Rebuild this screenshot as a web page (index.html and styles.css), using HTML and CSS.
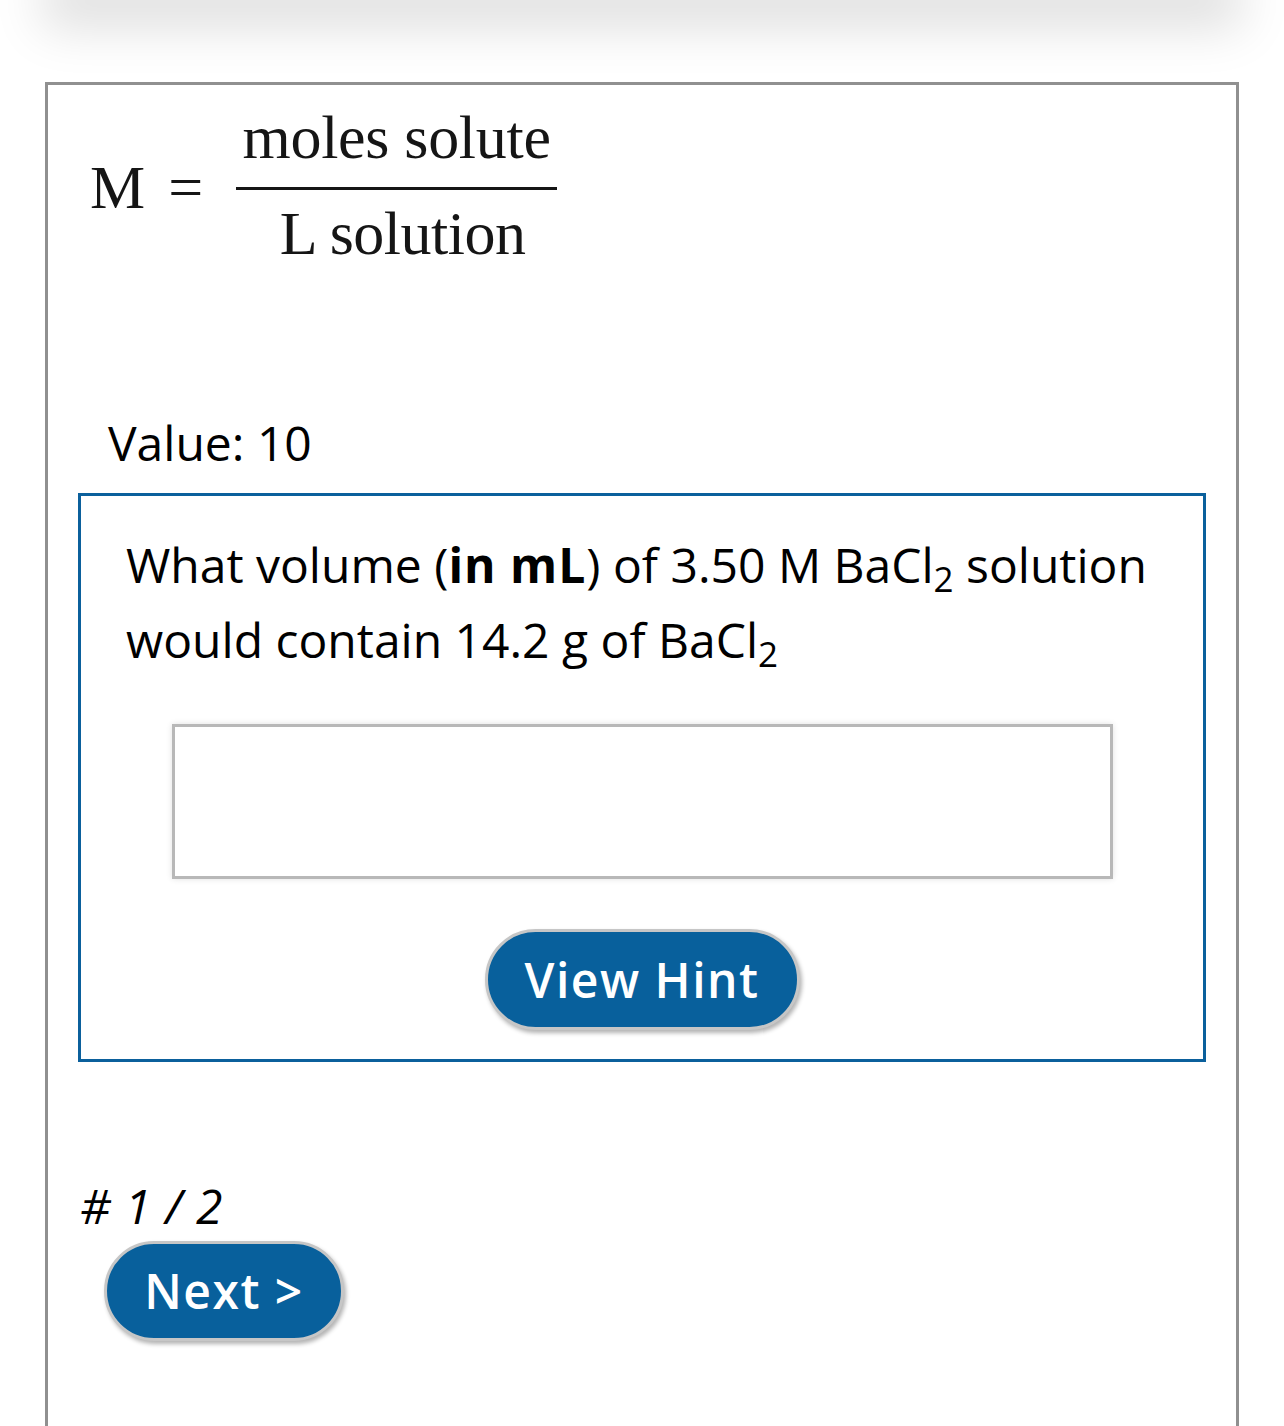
FILE: index.html
```html
<!DOCTYPE html>
<html>
<head>
<meta charset="utf-8">
<link rel="stylesheet" href="styles.css">
</head>
<body>
<div class="topshade"></div>
<main class="card">
  <div class="formula">
    <span class="f-m">M</span>
    <span class="f-eq">=</span>
    <span class="frac">
      <span class="num">moles solute</span>
      <span class="bar"></span>
      <span class="den">L solution</span>
    </span>
  </div>
  <p class="value">Value: 10</p>
  <section class="question">
    <p class="qtext">What volume (<b>in mL</b>) of 3.50 M BaCl<sub>2</sub> solution would contain 14.2 g of BaCl<sub>2</sub></p>
    <input class="answer" type="text">
    <div class="hintrow"><button class="pill hint">View Hint</button></div>
  </section>
  <p class="counter"># 1 / 2</p>
  <button class="pill next">Next &gt;</button>
</main>
</body>
</html>
```
FILE: styles.css
```css
html, body {
  margin: 0;
  padding: 0;
  background: #ffffff;
}
body {
  font-family: "Open Sans", "Liberation Sans", sans-serif;
  color: #000;
  overflow: hidden;
}
.topshade {
  height: 0;
  margin: 0 70px;
  box-shadow: 0 0 50px 28px rgba(0, 0, 0, 0.13);
}
.card {
  margin: 82px 45px 0 45px;
  border: 3px solid #909090;
  border-bottom: none;
  min-height: 1400px;
  box-sizing: border-box;
}
.formula {
  display: flex;
  align-items: flex-start;
  font-family: "Liberation Serif", "Times New Roman", serif;
  font-size: 62px;
  color: #151515;
  margin: 17px 0 0 42px;
  line-height: 62px;
}
.f-m {
  display: block;
  margin-top: 54px;
  letter-spacing: -1px;
}
.f-eq {
  display: block;
  margin: 54px 33px 0 24px;
}
.frac {
  display: flex;
  flex-direction: column;
  align-items: center;
  width: 321px;
}
.num {
  display: block;
  line-height: 70px;
  margin-bottom: 15px;
  letter-spacing: -0.3px;
}
.bar {
  display: block;
  width: 100%;
  height: 3px;
  background: #151515;
}
.den {
  display: block;
  line-height: 70px;
  margin-top: 8px;
  letter-spacing: -0.5px;
  padding-left: 12px;
}
.value {
  margin: 137px 0 0 60px;
  font-size: 48px;
  line-height: 75px;
}
.question {
  margin: 13px 30px 0 30px;
  border: 3px solid #0b609c;
  padding: 31px 0 29px 0;
}
.qtext {
  margin: 0 16px 0 45px;
  font-size: 48px;
  line-height: 75px;
}
.qtext b {
  font-weight: 700;
  letter-spacing: 1px;
}
.qtext sub {
  font-size: 35px;
  line-height: 0;
  vertical-align: -9px;
}
.answer {
  display: block;
  box-sizing: border-box;
  width: 941px;
  height: 155px;
  margin: 47px auto 0 auto;
  border: 3px solid #b8b8b8;
  box-shadow: 0 0 6px rgba(0, 0, 0, 0.12);
  background: #fff;
  outline: none;
  padding: 0;
}
.hintrow {
  display: flex;
  justify-content: center;
  margin-top: 50px;
}
.pill {
  font-family: "Open Sans", "Liberation Sans", sans-serif;
  font-weight: 600;
  font-size: 48px;
  color: #fff;
  background: #08609c;
  border: 3px solid #c6c6c6;
  border-radius: 60px;
  box-shadow: 2px 3px 4px rgba(0, 0, 0, 0.3);
  letter-spacing: 1.5px;
  line-height: 60px;
  box-sizing: border-box;
  padding: 0;
  cursor: pointer;
}
.hint {
  width: 315px;
  height: 101px;
}
.counter {
  margin: 106px 0 0 32px;
  font-size: 48px;
  line-height: 75px;
  font-style: italic;
  word-spacing: 1.5px;
}
.next {
  display: block;
  width: 240px;
  height: 100px;
  margin: -2px 0 0 56px;
}
```
